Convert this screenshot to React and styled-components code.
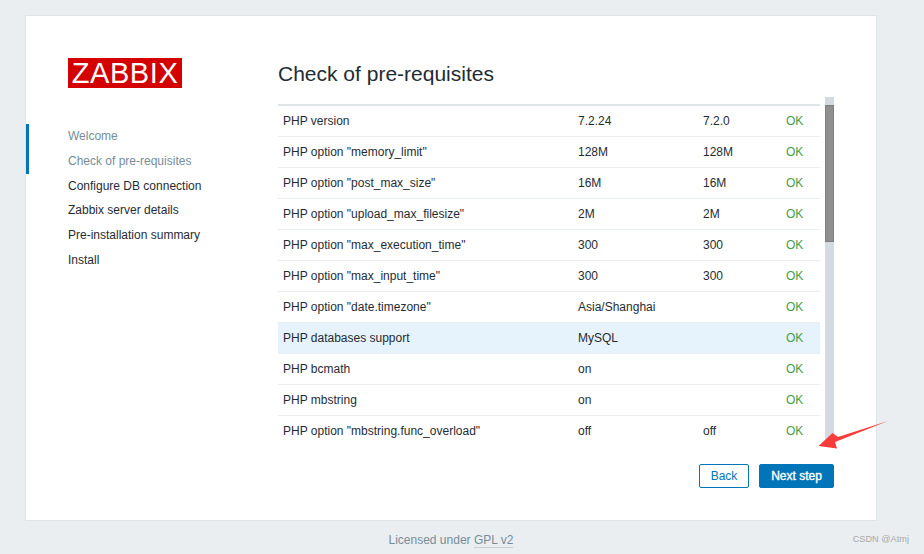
import React from 'react'
import styled, { createGlobalStyle } from 'styled-components'

const GlobalStyle = createGlobalStyle`
  html, body {
    margin: 0;
    padding: 0;
    height: 100%;
    background: #ebeef0;
    font-family: "Liberation Sans", Arial, sans-serif;
    font-size: 12px;
    color: #1f2c33;
  }
`

const Page = styled.div`
  position: relative;
  width: 924px;
  height: 554px;
  padding: 15px 0 0 25px;
  box-sizing: border-box;
  overflow: hidden;
`

const Card = styled.div`
  display: flex;
  box-sizing: border-box;
  width: 852px;
  height: 506px;
  background: #fff;
  border: 1px solid #dfe4e7;
`

const Sidebar = styled.div`
  flex: 0 0 252px;
  padding-top: 42px;
`

const Logo = styled.div`
  width: 114px;
  height: 30px;
  margin-left: 42px;
  background: #d40000;
  color: #fff;
  font-size: 29px;
  line-height: 30px;
  letter-spacing: 0.6px;
  text-align: center;
`

const Steps = styled.ul`
  list-style: none;
  margin: 36px 0 0;
  padding: 0;
`

const Step = styled.li`
  box-sizing: border-box;
  height: 24.75px;
  line-height: 24px;
  padding-left: 39px;
  border-left: 3px solid ${p => (p.$current ? '#0275b8' : 'transparent')};
  color: ${p => (p.$done ? '#768d99' : '#1f2c33')};
`

const Main = styled.div`
  flex: 1;
  display: flex;
  flex-direction: column;
  padding-right: 42px;
`

const Title = styled.h1`
  margin: 0;
  padding-top: 46px;
  height: 35px;
  font-size: 21px;
  line-height: 24px;
  font-weight: normal;
  color: #1f2c33;
`

const Checks = styled.div`
  display: flex;
  gap: 5px;
  height: 349px;
`

const Pane = styled.div`
  width: 542px;
  padding-top: 7px;
  box-sizing: border-box;
  overflow: hidden;
`

const Track = styled.div`
  width: 9px;
  background: #d3dbe1;
  padding-top: 8px;
`

const Thumb = styled.div`
  box-sizing: border-box;
  height: 137px;
  background: #8f8f8f;
  border: 1px solid #7f7f7f;
`

const Table = styled.table`
  width: 542px;
  table-layout: fixed;
  border-collapse: collapse;
  border-top: 2px solid #dfe4e7;
`

const Row = styled.tr`
  height: 31px;
  border-bottom: 1px solid #ebeef0;
  background: ${p => (p.$hot ? '#e6f3fc' : 'transparent')};
  &:last-child {
    border-bottom: 0;
  }
`

const Cell = styled.td`
  box-sizing: border-box;
  width: ${p => p.$w}px;
  padding: 0 5px;
  white-space: nowrap;
  color: ${p => (p.$ok ? '#3f9e48' : '#1f2c33')};
`

const Buttons = styled.div`
  display: flex;
  justify-content: flex-end;
  gap: 10px;
  margin-top: 18px;
`

const Button = styled.button`
  box-sizing: border-box;
  height: 24px;
  width: ${p => p.$w}px;
  padding: 0;
  border: 1px solid #0275b8;
  border-radius: 2px;
  background: ${p => (p.$primary ? '#0275b8' : '#fff')};
  color: ${p => (p.$primary ? '#fff' : '#0275b8')};
  font-family: inherit;
  font-size: 12px;
  -webkit-text-stroke: ${p => (p.$primary ? '0.35px #fff' : '0')};
`

const Footer = styled.div`
  width: 852px;
  margin-top: 11px;
  text-align: center;
  line-height: 16px;
  color: #768d99;
`

const Gpl = styled.a`
  color: #768d99;
  border-bottom: 1px solid #c5d0d6;
`

const Watermark = styled.div`
  position: absolute;
  right: 15px;
  top: 533px;
  font-size: 9.2px;
  line-height: 12px;
  color: #a9a9a9;
`

const Arrow = styled.svg`
  position: absolute;
  left: 815px;
  top: 418px;
`

const steps = [
  ['Welcome', true, true],
  ['Check of pre-requisites', true, true],
  ['Configure DB connection'],
  ['Zabbix server details'],
  ['Pre-installation summary'],
  ['Install'],
]

const rows = [
  ['PHP version', '7.2.24', '7.2.0'],
  ['PHP option "memory_limit"', '128M', '128M'],
  ['PHP option "post_max_size"', '16M', '16M'],
  ['PHP option "upload_max_filesize"', '2M', '2M'],
  ['PHP option "max_execution_time"', '300', '300'],
  ['PHP option "max_input_time"', '300', '300'],
  ['PHP option "date.timezone"', 'Asia/Shanghai', ''],
  ['PHP databases support', 'MySQL', ''],
  ['PHP bcmath', 'on', ''],
  ['PHP mbstring', 'on', ''],
  ['PHP option "mbstring.func_overload"', 'off', 'off'],
]

export default function App() {
  return (
    <Page>
      <GlobalStyle />
      <Card>
        <Sidebar>
          <Logo>ZABBIX</Logo>
          <Steps>
            {steps.map(([name, done, current]) => (
              <Step key={name} $done={done} $current={current}>{name}</Step>
            ))}
          </Steps>
        </Sidebar>
        <Main>
          <Title>Check of pre-requisites</Title>
          <Checks>
            <Pane>
              <Table>
                <tbody>
                  {rows.map(([name, current, required]) => (
                    <Row key={name} $hot={name === 'PHP databases support'}>
                      <Cell $w={295}>{name}</Cell>
                      <Cell $w={125}>{current}</Cell>
                      <Cell $w={83}>{required}</Cell>
                      <Cell $w={39} $ok>OK</Cell>
                    </Row>
                  ))}
                </tbody>
              </Table>
            </Pane>
            <Track><Thumb /></Track>
          </Checks>
          <Buttons>
            <Button $w={50}>Back</Button>
            <Button $w={75} $primary>Next step</Button>
          </Buttons>
        </Main>
      </Card>
      <Footer>Licensed under <Gpl>GPL v2</Gpl></Footer>
      <Arrow width="76" height="34" viewBox="815 418 76 34">
        <polygon points="888,421 838,437 832.5,433 818.5,446 837,448.5 835,442" fill="#f93b3b" />
      </Arrow>
      <Watermark>CSDN @Atmj</Watermark>
    </Page>
  )
}
